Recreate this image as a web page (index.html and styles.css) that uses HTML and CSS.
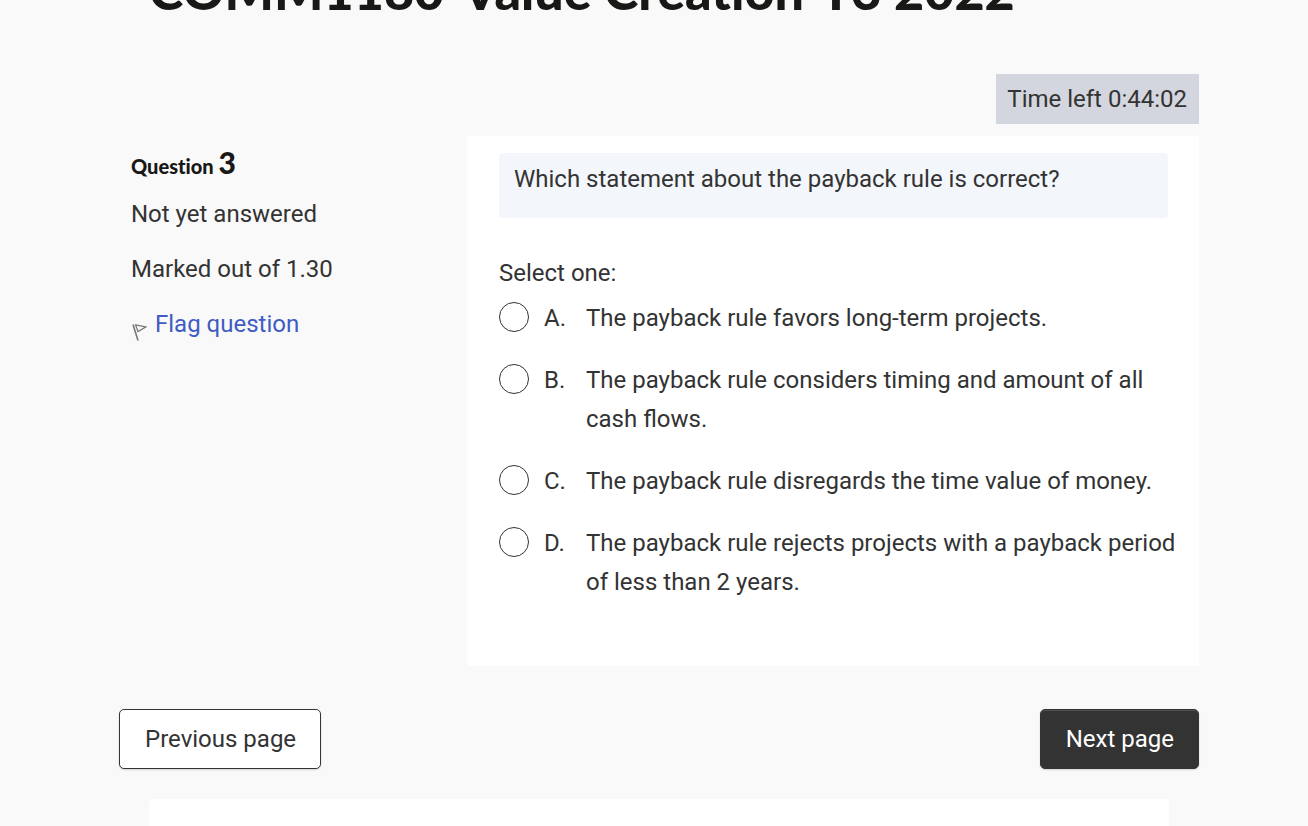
FILE: index.html
```
<!DOCTYPE html>
<html lang="en">
<head>
    <meta charset="UTF-8">
    <meta name="viewport" content="width=device-width, initial-scale=1">
    <title>COMM1180-Value Creation-T3 2022</title>
    <link rel="stylesheet" href="styles.css">
</head>
<body>
    <main class="page">
        <h1>COMM1180-Value Creation-T3 2022</h1>

        <div class="timer" role="timer">Time left 0:44:02</div>

        <form class="quiz">
            <div class="question">
                <!-- Question status -->
                <aside class="info">
                    <h2>Question <span class="number">3</span></h2>
                    <p>Not yet answered</p>
                    <p>Marked out of 1.30</p>
                    <a class="flag" href="#">
                        <svg width="16" height="20" viewBox="0 0 16 20" fill="none" stroke="#777" aria-hidden="true">
                            <path d="M2 2.5 L7 18.5" stroke-width="1.6"/>
                            <path d="M4.5 2.8 L15 4.8 L7 9.5 Z" stroke-width="1.2"/>
                        </svg>
                        <span>Flag question</span>
                    </a>
                </aside>

                <!-- Question text and answers -->
                <section class="content">
                    <p class="question-text">Which statement about the payback rule is correct?</p>
                    <fieldset class="answers">
                        <legend>Select one:</legend>
                        <label class="answer" for="answer-a">
                            <input type="radio" name="answer" id="answer-a">
                            <span class="letter">A.</span>
                            <span>The payback rule favors long-term projects.</span>
                        </label>
                        <label class="answer" for="answer-b">
                            <input type="radio" name="answer" id="answer-b">
                            <span class="letter">B.</span>
                            <span>The payback rule considers timing and amount of all cash flows.</span>
                        </label>
                        <label class="answer" for="answer-c">
                            <input type="radio" name="answer" id="answer-c">
                            <span class="letter">C.</span>
                            <span>The payback rule disregards the time value of money.</span>
                        </label>
                        <label class="answer" for="answer-d">
                            <input type="radio" name="answer" id="answer-d">
                            <span class="letter">D.</span>
                            <span>The payback rule rejects projects with a payback period of less than 2 years.</span>
                        </label>
                    </fieldset>
                </section>
            </div>

            <div class="buttons">
                <button type="button" class="btn">Previous page</button>
                <button type="button" class="btn btn-primary">Next page</button>
            </div>
        </form>

        <div class="panel"></div>
    </main>
</body>
</html>
```

FILE: styles.css
```
* {
    box-sizing: border-box;
    margin: 0;
    padding: 0;
}

body {
    font-family: Roboto, "Liberation Sans", sans-serif;
    font-size: 24px;
    line-height: 39px;
    color: #333;
    background-color: #f9f9f9;
}

.page {
    display: flex;
    flex-direction: column;
    min-height: 100vh;
    padding: 0 109px 0 119px;
    overflow: hidden;
}

h1,
h2 {
    font-family: Lato, sans-serif;
    font-weight: 900;
    font-variant-ligatures: none;
    color: #181816;
}

h1 {
    margin: -40px 30px 0;
    font-size: 52px;
    line-height: 60px;
    white-space: nowrap;
}

.timer {
    align-self: flex-end;
    margin: 54px 0 12px;
    padding: 6px 12px 5px 11px;
    background-color: #d3d6de;
}

.question {
    display: grid;
    grid-template-columns: 348px 1fr;
}

.info {
    display: flex;
    flex-direction: column;
    gap: 16px;
    padding: 7px 12px;
}

.info h2 {
    margin-bottom: -7px;
    font-size: 20px;
}

.info .number {
    font-size: 30px;
}

.flag {
    display: flex;
    align-items: flex-end;
    gap: 8px;
    color: #415bc4;
    text-decoration: none;
}

.flag svg {
    margin-bottom: 2px;
}

.flag:hover span {
    text-decoration: underline;
}

.content {
    padding: 17px 16px 64px 32px;
    background-color: #fff;
}

.question-text {
    margin: 0 15px 36px 0;
    padding: 7px 15px 19px;
    border-radius: 4px;
    background-color: #f3f6fa;
}

.answers {
    display: flex;
    flex-direction: column;
    gap: 23px;
    border: none;
}

.answers legend {
    margin-bottom: 6px;
}

.answer {
    display: grid;
    grid-template-columns: 30px 27px 1fr;
    column-gap: 15px;
}

.answer input {
    appearance: none;
    width: 30px;
    height: 30px;
    margin-top: 3px;
    border: 1px solid #333;
    border-radius: 50%;
    background-color: #fff;
}

.answer input:checked {
    border-width: 9px;
}

.buttons {
    display: flex;
    justify-content: space-between;
    margin: 43px 0 30px;
}

.btn {
    height: 60px;
    padding: 0 24px 0 25px;
    font: inherit;
    color: #333;
    background-color: #fff;
    border: 1px solid #333;
    border-radius: 5px;
    box-shadow: 0 1px 2px rgba(0, 0, 0, 0.15);
    cursor: pointer;
}

.btn-primary {
    color: #fff;
    background-color: #333;
    box-shadow: inset 0 1px 0 rgba(255, 255, 255, 0.15), 0 1px 2px rgba(0, 0, 0, 0.15);
}

.panel {
    flex: 1;
    margin: 0 30px;
    border-radius: 4px 4px 0 0;
    background-color: #fff;
}

@media (max-width: 900px) {
    .page {
        padding: 0 16px;
    }

    .question {
        grid-template-columns: 1fr;
    }
}
```
